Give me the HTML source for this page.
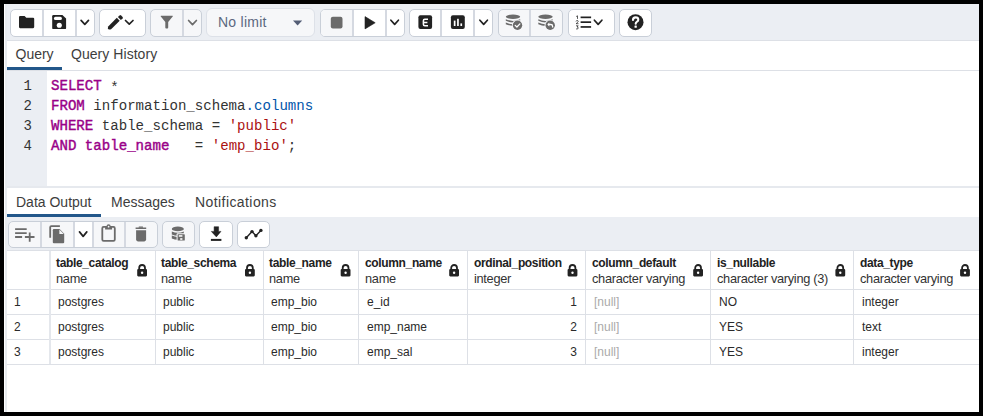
<!DOCTYPE html>
<html><head><meta charset="utf-8">
<style>
*{box-sizing:border-box;margin:0;padding:0}
html,body{width:983px;height:416px;overflow:hidden;background:#000}
body{position:relative;font-family:"Liberation Sans",sans-serif;color:#222}
.a{position:absolute}
#app{left:4px;top:4px;width:975px;height:408px;background:#fff}
#lb{left:5px;top:4px;width:2px;height:408px;background:#e8ebef}
.tb{left:4px;width:975px;background:#ebeef3;border-bottom:1px solid #dde0e6}
.grp{position:absolute;border:1px solid #cfd4dc;border-radius:5px;background:#fff;overflow:hidden;display:flex}
.grp2{position:absolute;border:1px solid #c9cfd8;border-radius:5px;background:#fff;overflow:hidden}
.sec{position:absolute;top:0;bottom:0}
.dv{position:absolute;top:0;bottom:0;width:2px;background:#d5d9e1}
.btn{height:100%;position:relative;border-left:1px solid #dde0e6}
.btn:first-child{border-left:none}
.dis{background:#f3f4f7}
.tab{position:absolute;font-size:14px;color:#3d3d3d;white-space:nowrap}
.ul{position:absolute;background:#22578a;height:3px}
.hline{position:absolute;height:1px;background:#dde0e6}
.code{position:absolute;font-family:"Liberation Mono",monospace;font-size:14.1px;white-space:pre;color:#333;line-height:20px}
.kw{color:#908;-webkit-text-stroke:0.4px #908}
.st{color:#a11}
.pr{color:#05a}
.ln{position:absolute;font-family:"Liberation Mono",monospace;font-size:14px;color:#333;line-height:20px;text-align:right;width:20px}
.vl{position:absolute;width:1px;background:#dde0e6}
.hd{position:absolute;font-size:12px;white-space:nowrap;color:#222}
.hd b{display:block;font-weight:bold;letter-spacing:-0.35px;line-height:16px}
.hd span{display:block;line-height:16px;color:#333;font-size:12.8px;letter-spacing:-0.3px}
.cell{position:absolute;font-size:12px;white-space:nowrap;color:#2a2a2a;line-height:14px}
.nul{color:#aaa}
svg{position:absolute}
</style></head><body>
<div class="a" id="app"></div>

<!-- top toolbar -->
<div class="a tb" style="top:4px;height:37px;left:5px;width:974px"></div>

<div class="grp2" style="left:10px;top:9px;width:85px;height:28px;"><div class="dv" style="left:31px"></div><div class="dv" style="left:64px"></div></div>
<div class="grp2" style="left:99px;top:9px;width:47px;height:28px;"></div>
<div class="grp2" style="left:150px;top:9px;width:52px;height:28px;background:#f6f7f9"><div class="dv" style="left:31px"></div></div>
<div class="grp2" style="left:206px;top:8px;width:109px;height:29px;background:#f6f7f9;border-color:#dde1e8;border-radius:6px"></div>
<div class="tab" style="left:218px;top:14.4px;font-size:14px;letter-spacing:0.25px;color:#5b6880">No limit</div>
<div class="grp2" style="left:320px;top:9px;width:85px;height:28px;"><div class="sec" style="left:-1px;width:32px;background:#f6f7f9"></div><div class="dv" style="left:31px"></div><div class="dv" style="left:63.5px"></div></div>
<div class="grp2" style="left:409px;top:9px;width:84px;height:28px;"><div class="dv" style="left:30px"></div><div class="dv" style="left:63px"></div></div>
<div class="grp2" style="left:498px;top:9px;width:65px;height:28px;background:#f6f7f9"><div class="dv" style="left:30px"></div></div>
<div class="grp2" style="left:568px;top:9px;width:47px;height:28px;"></div>
<div class="grp2" style="left:619px;top:9px;width:33px;height:28px;"></div>

<!-- query tabs -->
<div id="lb" class="a"></div>
<div class="tab" style="left:15.5px;top:46.2px">Query</div>
<div class="tab" style="left:71px;top:46.2px;letter-spacing:0.05px">Query History</div>
<div class="ul" style="left:7px;top:67px;width:55px"></div>
<div class="hline" style="left:7px;top:70px;width:972px"></div>

<!-- editor -->
<div class="a" style="left:7px;top:71px;width:40px;height:115px;background:#ebeef3"></div>
<div class="ln" style="left:12px;top:76px">1<br>2<br>3<br>4</div>
<div class="code" style="left:51px;top:76px"><span class="kw">SELECT</span> <span style="position:relative;top:2px">*</span>
<span class="kw">FROM</span> information_schema<span class="pr">.columns</span>
<span class="kw">WHERE</span> table_schema = <span class="st">'public'</span>
<span class="kw">AND</span> <span class="kw">table_name</span>   = <span class="st">'emp_bio'</span>;</div>
<div class="hline" style="left:7px;top:186px;height:2px;width:972px;background:#e6e9ee"></div>

<!-- data output tabs -->
<div class="tab" style="left:16px;top:193.6px">Data Output</div>
<div class="tab" style="left:111px;top:193.6px">Messages</div>
<div class="tab" style="left:195px;top:193.6px;letter-spacing:0.42px">Notifications</div>
<div class="ul" style="left:7px;top:214px;width:94px"></div>

<div class="a tb" style="top:217px;height:34px;left:7px;width:972px"></div>
<div class="grp2" style="left:8px;top:221px;width:150px;height:27px;background:#f6f7f9"><div class="sec" style="left:64px;width:19px;background:#fff"></div><div class="dv" style="left:31px"></div><div class="dv" style="left:64px"></div><div class="dv" style="left:83px"></div><div class="dv" style="left:115px"></div></div>
<div class="grp2" style="left:162px;top:221px;width:33px;height:27px;background:#f6f7f9"></div>
<div class="grp2" style="left:199px;top:221px;width:34px;height:27px;"></div>
<div class="grp2" style="left:237px;top:221px;width:33px;height:27px;"></div>

<!-- grid -->
<div class="hline" style="left:7px;top:289px;width:972px"></div>
<div class="hline" style="left:7px;top:314px;width:972px"></div>
<div class="hline" style="left:7px;top:339px;width:972px"></div>
<div class="hline" style="left:7px;top:364px;width:972px"></div>
<div class="vl" style="left:49px;top:251px;height:113px;width:2px;background:#e4e7ec"></div>
<div class="vl" style="left:155px;top:251px;height:113px"></div>
<div class="vl" style="left:263px;top:251px;height:113px"></div>
<div class="vl" style="left:358px;top:251px;height:113px"></div>
<div class="vl" style="left:467px;top:251px;height:113px"></div>
<div class="vl" style="left:585px;top:251px;height:113px"></div>
<div class="vl" style="left:710px;top:251px;height:113px"></div>
<div class="vl" style="left:853px;top:251px;height:113px"></div>

<div class="hd" style="left:56px;top:254.5px"><b>table_catalog</b><span>name</span></div>
<div class="hd" style="left:161px;top:254.5px"><b>table_schema</b><span>name</span></div>
<div class="hd" style="left:269px;top:254.5px"><b>table_name</b><span>name</span></div>
<div class="hd" style="left:365px;top:254.5px"><b>column_name</b><span>name</span></div>
<div class="hd" style="left:474px;top:254.5px"><b>ordinal_position</b><span>integer</span></div>
<div class="hd" style="left:592px;top:254.5px"><b>column_default</b><span>character varying</span></div>
<div class="hd" style="left:717px;top:254.5px"><b>is_nullable</b><span>character varying (3)</span></div>
<div class="hd" style="left:860px;top:254.5px"><b>data_type</b><span>character varying</span></div>

<!-- rows -->
<div class="cell" style="left:14px;top:295px">1</div>
<div class="cell" style="left:14px;top:320px">2</div>
<div class="cell" style="left:14px;top:345px">3</div>
<div class="cell" style="left:58px;top:295px">postgres</div>
<div class="cell" style="left:163px;top:295px">public</div>
<div class="cell" style="left:271px;top:295px">emp_bio</div>
<div class="cell" style="left:367px;top:295px">e_id</div>
<div class="cell" style="left:467px;width:110px;text-align:right;top:295px">1</div>
<div class="cell nul" style="left:594px;top:295px">[null]</div>
<div class="cell" style="left:719px;top:295px">NO</div>
<div class="cell" style="left:862px;top:295px">integer</div>
<div class="cell" style="left:58px;top:320px">postgres</div>
<div class="cell" style="left:163px;top:320px">public</div>
<div class="cell" style="left:271px;top:320px">emp_bio</div>
<div class="cell" style="left:367px;top:320px">emp_name</div>
<div class="cell" style="left:467px;width:110px;text-align:right;top:320px">2</div>
<div class="cell nul" style="left:594px;top:320px">[null]</div>
<div class="cell" style="left:719px;top:320px">YES</div>
<div class="cell" style="left:862px;top:320px">text</div>
<div class="cell" style="left:58px;top:345px">postgres</div>
<div class="cell" style="left:163px;top:345px">public</div>
<div class="cell" style="left:271px;top:345px">emp_bio</div>
<div class="cell" style="left:367px;top:345px">emp_sal</div>
<div class="cell" style="left:467px;width:110px;text-align:right;top:345px">3</div>
<div class="cell nul" style="left:594px;top:345px">[null]</div>
<div class="cell" style="left:719px;top:345px">YES</div>
<div class="cell" style="left:862px;top:345px">integer</div>
<svg class="a" style="left:0;top:0" width="983" height="416" viewBox="0 0 983 416"><path d="M19 17 Q19 15.9 20.1 15.9 H24.6 L26.3 17.7 H33.1 Q34.2 17.7 34.2 18.8 V27.1 Q34.2 28.2 33.1 28.2 H20.1 Q19 28.2 19 27.1 Z" fill="#222"/>
<path d="M52.2 16.3 Q52.2 15.1 53.4 15.1 H62.4 L66.1 18.6 V27.9 Q66.1 29.1 64.9 29.1 H53.4 Q52.2 29.1 52.2 27.9 Z" fill="#222"/><rect x="53.9" y="16.8" width="8" height="3.2" rx="1.6" fill="#fff"/><circle cx="59.3" cy="25.2" r="2.55" fill="#fff"/>
<path d="M81.1 20.400000000000002 L84.8 24.4 L88.5 20.400000000000002" fill="none" stroke="#222" stroke-width="1.7" stroke-linecap="round" stroke-linejoin="round"/>
<path d="M108.2 26.4 L116.8 17.8 L119.7 20.7 L111.1 29.3 Q108.6 29.9 108 29.1 Q107.5 28.4 108.2 26.4 Z" fill="#222"/><path d="M117.9 17.1 L119.6 15.4 Q120.4 14.8 121.1 15.4 L122.6 16.9 Q123.2 17.6 122.6 18.4 L120.9 20.1 Z" fill="#222"/>
<path d="M125.5 20.5 L129.25 24.2 L133.0 20.5" fill="none" stroke="#222" stroke-width="1.7" stroke-linecap="round" stroke-linejoin="round"/>
<path d="M160.6 16.2 Q160.4 15.8 160.9 15.8 H172.6 Q173.1 15.8 172.9 16.2 L168.2 22 V27.6 Q168.2 28.5 167.3 28.5 H166.2 Q165.3 28.5 165.3 27.6 V22 Z" fill="#6b6b6b"/>
<path d="M188.6 20.5 L192.5 24.7 L196.4 20.5" fill="none" stroke="#6b6b6b" stroke-width="1.7" stroke-linecap="round" stroke-linejoin="round"/>
<path d="M293 20.4 H302.2 L297.6 25.6 Z" fill="#535d75"/>
<rect x="330.8" y="16.7" width="11.7" height="11.9" rx="2" fill="#6b6b6b"/>
<path d="M365 16.6 V28.9 L375.2 22.75 Z" fill="#222" stroke="#222" stroke-width="0.6" stroke-linejoin="round"/>
<path d="M390.90000000000003 20.200000000000003 L394.65 24.4 L398.4 20.200000000000003" fill="none" stroke="#222" stroke-width="1.7" stroke-linecap="round" stroke-linejoin="round"/>
<rect x="418.4" y="15.3" width="13.7" height="13.6" rx="2" fill="#222"/><path d="M428 19.3 H424.8 Q423.4 19.3 423.4 20.7 V24.3 Q423.4 25.7 424.8 25.7 H428 M423.4 22.5 H427.4" fill="none" stroke="#fff" stroke-width="1.55"/>
<rect x="450.9" y="15.3" width="13.9" height="13.6" rx="2" fill="#222"/><rect x="453.8" y="20.6" width="1.7" height="5.4" fill="#fff"/><rect x="457.1" y="18.8" width="1.7" height="7.2" fill="#fff"/><rect x="460.4" y="23.4" width="1.7" height="2.6" fill="#fff"/>
<path d="M479.90000000000003 20.200000000000003 L483.65 24.4 L487.4 20.200000000000003" fill="none" stroke="#222" stroke-width="1.7" stroke-linecap="round" stroke-linejoin="round"/>
<ellipse cx="513.0" cy="16.7" rx="7.2" ry="2.2" fill="#6b6b6b"/><path d="M505.8 19.2 Q513.0 22.6 520.2 19.2 V20.8 Q513.0 24.2 505.8 20.8 Z" fill="#6b6b6b"/><path d="M505.8 22.6 Q513.0 26 520.2 22.6 V24.2 Q513.0 27.6 505.8 24.2 Z" fill="#6b6b6b"/>
<circle cx="517.5" cy="25.3" r="5.6" fill="#f6f7f9"/><circle cx="517.5" cy="25.3" r="4.7" fill="#6b6b6b"/><path d="M515.2 25.4 L516.9 27 L519.9 23.9" fill="none" stroke="#fff" stroke-width="1.3" stroke-linecap="round" stroke-linejoin="round"/>
<ellipse cx="545.5" cy="16.7" rx="7.2" ry="2.2" fill="#6b6b6b"/><path d="M538.3 19.2 Q545.5 22.6 552.6999999999999 19.2 V20.8 Q545.5 24.2 538.3 20.8 Z" fill="#6b6b6b"/><path d="M538.3 22.6 Q545.5 26 552.6999999999999 22.6 V24.2 Q545.5 27.6 538.3 24.2 Z" fill="#6b6b6b"/>
<circle cx="550.2" cy="25.3" r="5.6" fill="#f6f7f9"/><circle cx="550.2" cy="25.3" r="4.7" fill="#6b6b6b"/><path d="M548.3 24.5 H550.8 Q552.6 24.5 552.6 26.3 V27.6" fill="none" stroke="#fff" stroke-width="1.3"/><path d="M547.3 24.5 L549.3 22.6 V26.4 Z" fill="#fff"/>
<rect x="580.6" y="16.5" width="10.5" height="1.7" fill="#222"/><rect x="580.6" y="21.3" width="10.5" height="1.7" fill="#222"/><rect x="580.6" y="26.1" width="10.5" height="1.7" fill="#222"/><path d="M576.2 16.5 L577.5 15.8 V18.9" fill="none" stroke="#222" stroke-width="0.75"/><path d="M576 21.4 Q576.3 20.5 577.2 20.5 Q578.3 20.6 578.2 21.5 Q578 22.3 576.1 23.7 H578.5" fill="none" stroke="#222" stroke-width="0.75"/><path d="M576 25.8 H578.2 L577.1 27 Q578.4 27.2 578.3 28 Q578.1 29 577 29 Q576.3 29 576 28.6" fill="none" stroke="#222" stroke-width="0.75"/>
<path d="M594.4 20.200000000000003 L598.15 24.4 L601.9 20.200000000000003" fill="none" stroke="#222" stroke-width="1.7" stroke-linecap="round" stroke-linejoin="round"/>
<circle cx="635.5" cy="22.2" r="8" fill="#222"/><path d="M633 20 Q633 17.4 635.6 17.4 Q638.3 17.4 638.3 19.7 Q638.3 21.1 636.8 21.8 Q635.7 22.4 635.7 23.8" fill="none" stroke="#fff" stroke-width="2.1" stroke-linecap="round"/><rect x="634.5" y="25.6" width="2.3" height="2.1" rx="0.5" fill="#fff"/>
<path d="M15.1 229.1 H26.7 M15.1 233.1 H26.7 M15.1 237 H22.1 M24.9 237 H34.5 M29.7 232.5 V241.7" fill="none" stroke="#6b6b6b" stroke-width="1.8"/>
<path d="M50.2 237.8 V227.2 Q50.2 226.1 51.3 226.1 H59.9" fill="none" stroke="#6b6b6b" stroke-width="1.8"/><path d="M53.9 229.1 H59.6 L64.2 233.7 V242.2 Q64.2 243.3 63.1 243.3 H53.9 Q52.8 243.3 52.8 242.2 V230.2 Q52.8 229.1 53.9 229.1 Z" fill="#6b6b6b"/><path d="M59.4 229.6 V233.9 H63.7 Z" fill="#f6f7f9"/>
<path d="M79.5 231.9 L83.15 236.4 L86.80000000000001 231.9" fill="none" stroke="#222" stroke-width="1.7" stroke-linecap="round" stroke-linejoin="round"/>
<rect x="102.3" y="226.9" width="12.5" height="14" rx="1.3" fill="none" stroke="#6b6b6b" stroke-width="1.8"/><path d="M105.1 229.6 V227.5 Q105.1 226.6 106 226.6 H106.4 Q106.6 224.3 108.6 224.3 Q110.6 224.3 110.8 226.6 H111.2 Q112.1 226.6 112.1 227.5 V229.6 Z" fill="#6b6b6b"/><circle cx="108.6" cy="226.7" r="0.85" fill="#f6f7f9"/>
<rect x="135.6" y="227.5" width="10.6" height="1.5" fill="#6b6b6b"/><rect x="138.7" y="226.4" width="4.3" height="1.4" rx="0.4" fill="#6b6b6b"/><path d="M136.1 230.2 H146.1 V239.6 Q146.1 241.4 144.3 241.4 H137.9 Q136.1 241.4 136.1 239.6 Z" fill="#6b6b6b"/>
<ellipse cx="177.8" cy="228.9" rx="6" ry="2.3" fill="#6b6b6b"/><path d="M171.8 231.4 Q177.8 234 183.8 231.4 V234.5 Q177.8 237.1 171.8 234.5 Z" fill="#6b6b6b"/><path d="M171.8 235.6 Q177.8 238.2 183.8 235.6 V238.5 Q177.8 241.1 171.8 238.5 Z" fill="#6b6b6b"/><rect x="176.6" y="233.3" width="9.2" height="8.3" rx="1" fill="#f6f7f9"/><rect x="177.6" y="234.3" width="7.2" height="6.3" rx="0.6" fill="#6b6b6b"/><rect x="178.8" y="235.2" width="3.6" height="1.5" fill="#fff"/><rect x="180.2" y="238.2" width="2.2" height="1.6" fill="#fff"/>
<path d="M214.1 226.7 H218.6 V231.4 H221 L216.35 236.9 L211.3 231.4 H214.1 Z" fill="#222" stroke="#222" stroke-width="0.5" stroke-linejoin="round"/><rect x="210.9" y="238.9" width="10.5" height="2" fill="#222"/>
<path d="M246.3 237.7 L252 231.6 L255.9 235.7 L260.9 230.4" fill="none" stroke="#222" stroke-width="1.4"/><circle cx="246.3" cy="237.7" r="1.7" fill="#222"/><circle cx="252" cy="231.6" r="1.7" fill="#222"/><circle cx="255.9" cy="235.7" r="1.7" fill="#222"/><circle cx="260.9" cy="230.4" r="1.7" fill="#222"/>
<path d="M139.2 269.5 V267.9 A2.9 2.9 0 0 1 145.0 267.9 V269.5" fill="none" stroke="#222" stroke-width="1.8"/><rect x="137.2" y="269" width="9.8" height="7.4" rx="1.1" fill="#222"/><circle cx="142.1" cy="272.7" r="1.2" fill="#fff"/>
<path d="M247 269.5 V267.9 A2.9 2.9 0 0 1 252.8 267.9 V269.5" fill="none" stroke="#222" stroke-width="1.8"/><rect x="245" y="269" width="9.8" height="7.4" rx="1.1" fill="#222"/><circle cx="249.9" cy="272.7" r="1.2" fill="#fff"/>
<path d="M342.7 269.5 V267.9 A2.9 2.9 0 0 1 348.5 267.9 V269.5" fill="none" stroke="#222" stroke-width="1.8"/><rect x="340.7" y="269" width="9.8" height="7.4" rx="1.1" fill="#222"/><circle cx="345.59999999999997" cy="272.7" r="1.2" fill="#fff"/>
<path d="M451.2 269.5 V267.9 A2.9 2.9 0 0 1 457.0 267.9 V269.5" fill="none" stroke="#222" stroke-width="1.8"/><rect x="449.2" y="269" width="9.8" height="7.4" rx="1.1" fill="#222"/><circle cx="454.09999999999997" cy="272.7" r="1.2" fill="#fff"/>
<path d="M569.6 269.5 V267.9 A2.9 2.9 0 0 1 575.4 267.9 V269.5" fill="none" stroke="#222" stroke-width="1.8"/><rect x="567.6" y="269" width="9.8" height="7.4" rx="1.1" fill="#222"/><circle cx="572.5" cy="272.7" r="1.2" fill="#fff"/>
<path d="M695.2 269.5 V267.9 A2.9 2.9 0 0 1 701.0 267.9 V269.5" fill="none" stroke="#222" stroke-width="1.8"/><rect x="693.2" y="269" width="9.8" height="7.4" rx="1.1" fill="#222"/><circle cx="698.1" cy="272.7" r="1.2" fill="#fff"/>
<path d="M837.4 269.5 V267.9 A2.9 2.9 0 0 1 843.1999999999999 267.9 V269.5" fill="none" stroke="#222" stroke-width="1.8"/><rect x="835.4" y="269" width="9.8" height="7.4" rx="1.1" fill="#222"/><circle cx="840.3" cy="272.7" r="1.2" fill="#fff"/>
<path d="M962.1 269.5 V267.9 A2.9 2.9 0 0 1 967.9 267.9 V269.5" fill="none" stroke="#222" stroke-width="1.8"/><rect x="960.1" y="269" width="9.8" height="7.4" rx="1.1" fill="#222"/><circle cx="965.0" cy="272.7" r="1.2" fill="#fff"/></svg>
</body></html>
